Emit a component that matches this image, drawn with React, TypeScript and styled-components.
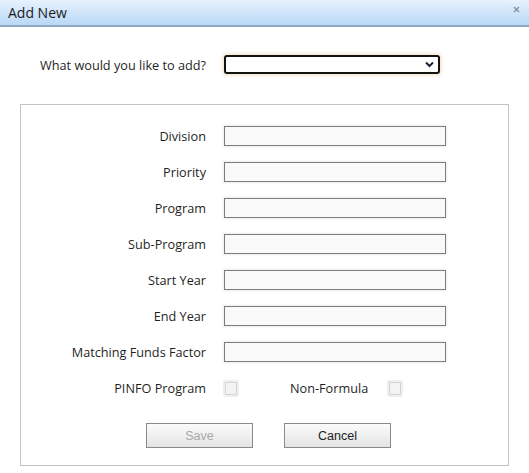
import { Fragment, FunctionComponent } from 'react';
import styled, { createGlobalStyle } from 'styled-components';

const GlobalStyle = createGlobalStyle`
  html, body {
    margin: 0;
    padding: 0;
    background: #ffffff;
  }
  body {
    font-family: 'Open Sans', 'Noto Sans', sans-serif;
    color: #1f1f1f;
  }
`;

const Dialog = styled.div`
  width: 529px;
  height: 473px;
  background: #ffffff;
  overflow: hidden;
`;

const TitleBar = styled.div`
  height: 25px;
  display: flex;
  align-items: center;
  justify-content: space-between;
  padding: 0 8px;
  background: linear-gradient(#e7f2fe, #b9d8f6);
  border-bottom: 2px solid #8fa8c2;
  box-sizing: content-box;
`;

const Title = styled.span`
  font-size: 14px;
  color: #1b1b1b;
  margin-top: -1px;
`;

const Close = styled.svg`
  width: 7px;
  height: 7px;
  margin-top: -6px;
  margin-right: 1px;
`;

const Body = styled.div`
  padding: 28px 20px 0 20px;
`;

const PickRow = styled.div`
  display: grid;
  grid-template-columns: 186px 216px;
  column-gap: 18px;
  align-items: center;
`;

const Label = styled.label`
  font-size: 12.7px;
  text-align: right;
  white-space: nowrap;
`;

const SelectBox = styled.div`
  position: relative;
  height: 19px;
  box-sizing: border-box;
  border: 2px solid #121212;
  border-radius: 3px;
  background: #ffffff;
  box-shadow: 0 0 3px 2px rgba(236, 206, 160, 0.45);
`;

const Chevron = styled.svg`
  position: absolute;
  right: 4px;
  top: 4px;
  width: 9px;
  height: 7px;
`;

const Panel = styled.div`
  margin-top: 30px;
  border: 1px solid #c3c3c3;
  height: 339px;
  padding-top: 21px;
  box-sizing: content-box;
  display: flex;
  flex-direction: column;
`;

const FieldGrid = styled.div`
  display: grid;
  grid-template-columns: 185px 222px;
  column-gap: 18px;
  row-gap: 16px;
  align-items: center;
`;

const TextBox = styled.input`
  height: 20px;
  box-sizing: border-box;
  border: 1px solid #7c7c7c;
  background: #f9f9f9;
  box-shadow: 0 0 2px 1px #ececec;
  margin: 0;
  padding: 0 3px;
  font-family: inherit;
  font-size: 12px;
  outline: none;
`;

const CheckLine = styled.div`
  display: flex;
  align-items: center;
  height: 20px;
`;

const Check = styled.span<{ $gap?: number }>`
  width: 12px;
  height: 13px;
  box-sizing: border-box;
  margin-left: ${(p) => p.$gap ?? 1}px;
  border: 1px solid #d4d4d4;
  border-radius: 1px;
  background: #f3f3f3;
  box-shadow: 0 0 1px 2px #eeeeee;
`;

const InlineLabel = styled.span`
  font-size: 12.7px;
  margin-left: 53px;
  white-space: nowrap;
`;

const ButtonRow = styled.div`
  display: flex;
  gap: 31px;
  padding-left: 125px;
  margin-top: 25px;
`;

const Button = styled.button<{ $disabled?: boolean }>`
  width: 107px;
  height: 25px;
  box-sizing: border-box;
  border: 1px solid #8a8a8a;
  background: linear-gradient(#fbfbfb, #e4e4e4);
  font-family: 'Liberation Sans', Arial, sans-serif;
  font-size: 12.5px;
  color: ${(p) => (p.$disabled ? '#a9a9a9' : '#222222')};
  padding: 0;
  cursor: default;
`;

const fields = [
  'Division',
  'Priority',
  'Program',
  'Sub-Program',
  'Start Year',
  'End Year',
  'Matching Funds Factor',
];

const App: FunctionComponent = () => (
  <>
    <GlobalStyle />
    <Dialog>
      <TitleBar>
        <Title>Add New</Title>
        <Close viewBox="0 0 7 7">
          <path d="M1 1 L6 6 M6 1 L1 6" stroke="#8796a8" strokeWidth="1.6" />
        </Close>
      </TitleBar>
      <Body>
        <PickRow>
          <Label>What would you like to add?</Label>
          <SelectBox>
            <Chevron viewBox="0 0 9 7">
              <path d="M1 1.5 L4.5 5 L8 1.5" fill="none" stroke="#1c2330" strokeWidth="2" />
            </Chevron>
          </SelectBox>
        </PickRow>
        <Panel>
          <FieldGrid>
            {fields.map((f) => (
              <Fragment key={f}>
                <Label>{f}</Label>
                <TextBox />
              </Fragment>
            ))}
            <Label>PINFO Program</Label>
            <CheckLine>
              <Check />
              <InlineLabel>Non-Formula</InlineLabel>
              <Check $gap={21} />
            </CheckLine>
          </FieldGrid>
          <ButtonRow>
            <Button $disabled>Save</Button>
            <Button>Cancel</Button>
          </ButtonRow>
        </Panel>
      </Body>
    </Dialog>
  </>
);

export default App;
